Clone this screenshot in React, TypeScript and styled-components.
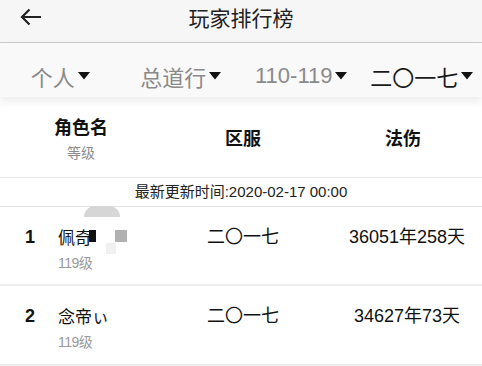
import * as React from 'react';
import styled, { createGlobalStyle } from 'styled-components';

const GlobalStyle = createGlobalStyle`
	html, body {
		margin: 0;
		padding: 0;
		background: #ffffff;
		font-family: 'Liberation Sans', 'Noto Sans CJK SC', sans-serif;
		color: #111;
	}
`;

const Page = styled.div`
	width: 482px;
	height: 366px;
	overflow: hidden;
	display: flex;
	flex-direction: column;
	background: #fff;
`;

const TopBar = styled.div`
	height: 43px;
	background: #f6f6f6;
	border-bottom: 1px solid #c9c9c9;
	display: flex;
	align-items: flex-start;
	position: relative;
`;

const BackButton = styled.div`
	width: 64px;
	height: 34px;
	display: flex;
	align-items: center;
	padding-left: 20px;
	box-sizing: border-box;
`;

const Title = styled.div`
	flex: 1;
	text-align: center;
	margin-right: 64px;
	font-size: 21px;
	line-height: 34px;
	color: #222;
	font-family: 'Noto Sans CJK SC', sans-serif;
`;

const FilterBar = styled.div`
	height: 56px;
	background: #f9f9f9;
	display: flex;
	align-items: center;
	padding-top: 12px;
	box-sizing: border-box;
	box-shadow: 0 5px 8px rgba(0, 0, 0, 0.07);
	position: relative;
	z-index: 1;
`;

const Filter = styled.div<{ active?: boolean }>`
	flex: 1;
	display: flex;
	justify-content: center;
	align-items: center;
	gap: 3px;
	font-size: 22px;
	color: ${({ active }) => (active ? '#1a1a1a' : '#8a8a8a')};
`;

const Caret = () => (
	<svg width="12" height="8" viewBox="0 0 12 8">
		<path d="M0 0 L12 0 L6 7.5 Z" fill="#111" />
	</svg>
);

const TableHead = styled.div`
	height: 82px;
	display: grid;
	grid-template-columns: 162px 162px 1fr;
	border-bottom: 1px solid #e6e6e6;
`;

const HeadCell = styled.div`
	display: flex;
	flex-direction: column;
	align-items: center;
	justify-content: center;
`;

const HeadTitle = styled.div`
	font-size: 18px;
	font-weight: bold;
	color: #111;
	font-family: 'Noto Sans CJK SC', sans-serif;
`;

const HeadSub = styled.div`
	font-size: 14px;
	color: #8c8c8c;
	margin-top: 3px;
	font-family: 'Noto Sans CJK SC', sans-serif;
`;

const UpdateRow = styled.div`
	height: 28px;
	line-height: 28px;
	text-align: center;
	font-size: 15px;
	color: #222;
	border-bottom: 1px solid #e3e3e3;
`;

const Row = styled.div`
	height: 80px;
	display: grid;
	grid-template-columns: 162px 162px 1fr;
	border-bottom: 2px solid #ececec;
`;

const NameCell = styled.div`
	display: flex;
	align-items: flex-start;
	padding: 18px 0 0 25px;
	position: relative;
`;

const Rank = styled.div`
	width: 33px;
	font-size: 18px;
	font-weight: bold;
	line-height: 24px;
`;

const NameBlock = styled.div`
	display: flex;
	flex-direction: column;
`;

const Name = styled.div`
	font-size: 17px;
	line-height: 24px;
	color: #111;
	font-family: 'Noto Sans CJK SC', sans-serif;
`;

const Level = styled.div`
	font-size: 14px;
	color: #999;
	margin-top: 3px;
	letter-spacing: -0.5px;
`;

const ValueCell = styled.div<{ shift?: number }>`
	display: flex;
	justify-content: center;
	padding-top: 18px;
	padding-left: ${({ shift }) => shift || 0}px;
	font-size: 18px;
	line-height: 24px;
	color: #111;
`;

const Blot = styled.span<{ x: number; y: number; w: number; h: number; c: string; round?: boolean }>`
	position: absolute;
	left: ${({ x }) => x}px;
	top: ${({ y }) => y}px;
	width: ${({ w }) => w}px;
	height: ${({ h }) => h}px;
	background: ${({ c }) => c};
	border-radius: ${({ round }) => (round ? '14px 14px 0 0' : '0')};
`;

const filters = [
	{ label: '个人', active: false },
	{ label: '总道行', active: false },
	{ label: '110-119', active: false },
	{ label: '二〇一七', active: true },
];

const rows = [
	{ rank: 1, name: '佩奇', level: '119级', server: '二〇一七', value: '36051年258天', blots: true },
	{ rank: 2, name: '念帝ぃ', level: '119级', server: '二〇一七', value: '34627年73天', blots: false },
];

const App = () => (
	<>
		<GlobalStyle />
		<Page>
			<TopBar>
				<BackButton>
					<svg width="22" height="18" viewBox="0 0 22 18">
						<path d="M21 9 H2 M9.5 1.5 L2 9 L9.5 16.5" stroke="#222" strokeWidth="2.2" fill="none" />
					</svg>
				</BackButton>
				<Title>玩家排行榜</Title>
			</TopBar>
			<FilterBar>
				{filters.map((f) => (
					<Filter key={f.label} active={f.active}>
						{f.label}
						<Caret />
					</Filter>
				))}
			</FilterBar>
			<TableHead>
				<HeadCell>
					<HeadTitle>角色名</HeadTitle>
					<HeadSub>等级</HeadSub>
				</HeadCell>
				<HeadCell>
					<HeadTitle>区服</HeadTitle>
				</HeadCell>
				<HeadCell>
					<HeadTitle>法伤</HeadTitle>
				</HeadCell>
			</TableHead>
			<UpdateRow>最新更新时间:2020-02-17 00:00</UpdateRow>
			{rows.map((r) => (
				<Row key={r.rank}>
					<NameCell>
						<Rank>{r.rank}</Rank>
						<NameBlock>
							<Name>{r.name}</Name>
							<Level>{r.level}</Level>
						</NameBlock>
						{r.blots && (
							<>
								<Blot x={84} y={-1} w={36} h={11} c="#d6d6d6" round />
								<Blot x={89} y={23} w={7} h={12} c="#111" />
								<Blot x={115} y={23} w={12} h={12} c="#b0b0b0" />
								<Blot x={106} y={36} w={10} h={11} c="#f0f0f0" />
							</>
						)}
					</NameCell>
					<ValueCell>{r.server}</ValueCell>
					<ValueCell shift={8}>{r.value}</ValueCell>
				</Row>
			))}
		</Page>
	</>
);

export default App;
